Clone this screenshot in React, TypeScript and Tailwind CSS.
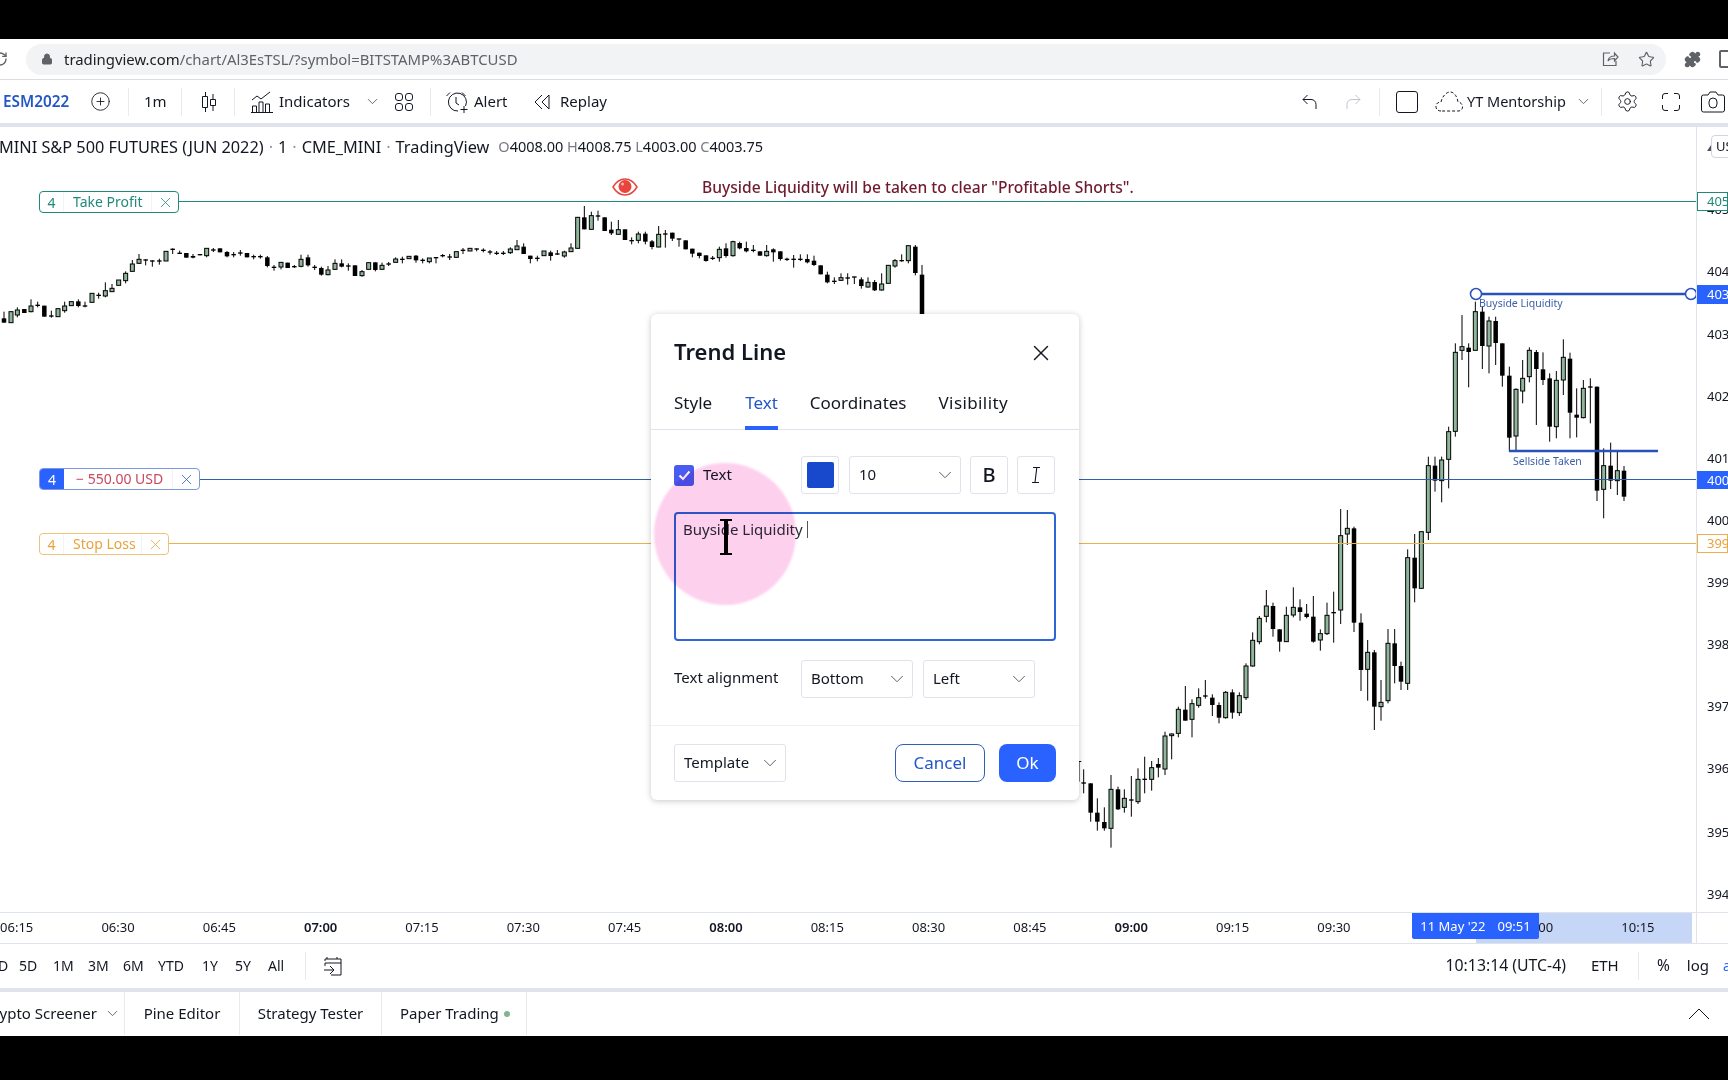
import React from "react";
import { ChevronDown, CirclePlus, Lock, Puzzle, RotateCw, Settings, Star, X } from "lucide-react";

type Row = [number, number, number, number, number, number];

// rows: x, bodyTop, bodyBottom, wickTop, wickBottom, up (read off at 3x, hence the /3)
const seg = (ox: number, oy: number, rows: Row[]) =>
  rows.map(([x, bt, bb, wt, wb, up]) => ({
    x: ox + x / 3,
    bt: oy + bt / 3,
    bb: oy + bb / 3,
    wt: oy + wt / 3,
    wb: oy + wb / 3,
    up: up === 1,
  }));

const candles = [
  ...seg(0, 180, [
    [12, 415, 428, 395, 428, 0], [33, 395, 428, 395, 428, 1], [52, 390, 405, 382, 412, 1], [73, 387, 399, 387, 399, 0],
    [93, 378, 395, 358, 397, 1], [113, 374, 378, 365, 382, 0], [133, 377, 410, 377, 410, 0], [154, 406, 410, 392, 413, 0],
    [174, 386, 410, 386, 410, 1], [194, 378, 392, 365, 398, 1], [214, 365, 377, 365, 377, 1], [235, 364, 378, 358, 382, 0],
    [255, 376, 380, 365, 382, 0], [276, 340, 367, 340, 367, 1], [296, 344, 348, 338, 356, 0], [316, 332, 348, 307, 352, 1],
    [336, 325, 335, 312, 335, 1], [356, 300, 316, 300, 316, 1], [377, 280, 302, 274, 310, 1], [397, 252, 274, 240, 275, 1],
    [417, 238, 250, 222, 252, 1], [437, 238, 242, 238, 256, 0], [457, 241, 245, 241, 260, 0], [478, 241, 245, 236, 254, 0],
    [498, 214, 243, 214, 243, 1], [518, 206, 210, 205, 222, 0], [539, 218, 222, 212, 222, 0], [559, 219, 233, 219, 233, 0],
    [579, 228, 233, 222, 235, 0], [600, 222, 226, 222, 226, 0], [620, 205, 227, 205, 232, 1], [640, 208, 212, 204, 216, 0],
    [660, 205, 217, 205, 217, 0], [681, 216, 229, 213, 232, 0], [701, 222, 226, 216, 232, 0], [721, 217, 221, 210, 227, 0],
    [741, 219, 232, 219, 232, 0], [761, 228, 232, 224, 238, 0], [781, 228, 232, 224, 236, 0], [802, 232, 258, 228, 262, 0],
    [822, 260, 264, 255, 272, 0], [843, 247, 261, 247, 268, 1], [863, 248, 264, 248, 264, 0], [883, 258, 262, 255, 264, 0],
    [903, 238, 259, 224, 262, 1], [924, 232, 256, 224, 260, 0], [944, 260, 264, 255, 270, 0], [964, 264, 284, 260, 287, 0],
    [984, 270, 284, 258, 286, 1], [1005, 250, 268, 238, 270, 1], [1025, 250, 260, 238, 262, 0], [1045, 256, 260, 250, 272, 0],
    [1065, 256, 288, 256, 288, 0], [1086, 275, 287, 270, 290, 1], [1106, 248, 268, 248, 268, 1], [1126, 247, 270, 247, 274, 0],
    [1146, 256, 268, 248, 270, 1], [1166, 250, 254, 246, 258, 0], [1187, 237, 247, 232, 248, 1], [1207, 236, 240, 230, 250, 0],
    [1227, 229, 236, 229, 236, 1], [1248, 227, 241, 225, 248, 0], [1268, 239, 243, 235, 250, 0], [1288, 234, 245, 234, 250, 1],
    [1308, 231, 235, 233, 250, 0], [1328, 225, 229, 222, 232, 0], [1349, 229, 233, 222, 240, 0], [1369, 215, 232, 215, 232, 1],
    [1389, 209, 213, 204, 222, 0], [1410, 205, 213, 205, 213, 1], [1430, 205, 209, 205, 214, 0],
  ]),
  ...seg(480, 190, [
    [10, 179, 183, 175, 187, 0], [30, 184, 188, 180, 194, 0], [50, 188, 192, 183, 195, 0], [70, 188, 192, 183, 195, 0],
    [91, 177, 188, 172, 192, 1], [111, 168, 179, 150, 180, 1], [131, 170, 192, 160, 192, 0], [151, 197, 207, 197, 220, 0],
    [172, 203, 207, 197, 214, 0], [192, 183, 197, 183, 197, 1], [212, 187, 198, 182, 212, 0], [232, 190, 194, 180, 195, 0],
    [253, 186, 198, 182, 203, 1], [273, 174, 185, 160, 186, 1], [293, 82, 175, 82, 175, 1], [313, 82, 118, 48, 118, 0],
    [334, 77, 118, 65, 118, 1], [354, 76, 80, 62, 92, 0], [374, 82, 123, 82, 123, 0], [394, 119, 130, 95, 135, 0],
    [415, 119, 133, 90, 133, 1], [435, 118, 150, 118, 150, 0], [455, 150, 154, 142, 163, 0], [475, 132, 151, 125, 160, 1],
    [496, 131, 155, 125, 163, 0], [516, 154, 171, 150, 178, 0], [536, 133, 171, 108, 172, 1], [556, 130, 134, 120, 173, 0],
    [577, 128, 146, 128, 153, 0], [597, 145, 149, 147, 170, 0], [617, 151, 178, 151, 178, 0], [637, 176, 191, 176, 202, 0],
    [658, 188, 198, 188, 205, 0], [678, 196, 213, 196, 215, 0], [698, 203, 207, 198, 210, 0], [718, 178, 203, 170, 215, 1],
    [738, 175, 198, 160, 203, 0], [759, 155, 197, 152, 200, 1], [779, 159, 175, 155, 178, 0], [799, 174, 184, 155, 187, 0],
    [820, 179, 183, 165, 187, 0], [840, 184, 197, 184, 197, 0], [860, 184, 197, 165, 200, 1], [880, 178, 187, 175, 215, 0],
    [901, 184, 207, 184, 212, 0], [921, 206, 210, 203, 213, 0], [941, 206, 210, 195, 233, 0], [961, 206, 210, 193, 213, 0],
    [982, 207, 217, 193, 220, 0], [1002, 212, 225, 197, 228, 0], [1022, 226, 253, 226, 253, 0], [1042, 254, 277, 245, 280, 0],
    [1063, 272, 276, 262, 282, 0], [1083, 263, 271, 250, 273, 1], [1103, 262, 266, 250, 284, 0], [1123, 259, 263, 261, 282, 0],
    [1144, 268, 288, 262, 296, 0], [1164, 277, 291, 262, 293, 1], [1184, 276, 301, 270, 303, 0], [1205, 282, 300, 250, 302, 1],
    [1225, 226, 280, 226, 280, 1], [1245, 212, 228, 207, 233, 1], [1265, 210, 214, 193, 215, 0], [1285, 167, 212, 167, 220, 1],
    [1306, 170, 249, 165, 256, 0], [1326, 254, 400, 225, 400, 0],
  ]),
  ...seg(1060, 480, [
    [57, 843, 846, 843, 905, 0], [71, 907, 911, 868, 940, 0], [92, 910, 998, 910, 1025, 0], [112, 998, 1025, 955, 1052, 0],
    [133, 1026, 1045, 982, 1052, 0], [153, 928, 1045, 885, 1103, 1], [174, 928, 988, 920, 990, 0], [193, 955, 982, 928, 998, 1],
    [214, 958, 962, 888, 1010, 0], [234, 898, 965, 865, 972, 1], [254, 896, 900, 830, 940, 0], [275, 863, 898, 843, 932, 1],
    [295, 852, 863, 834, 892, 0], [315, 768, 867, 755, 885, 1], [335, 762, 767, 760, 838, 1], [355, 688, 760, 680, 772, 1],
    [376, 689, 722, 618, 722, 0], [396, 671, 718, 658, 772, 1], [416, 653, 676, 625, 683, 1], [436, 646, 650, 600, 656, 0],
    [457, 653, 675, 643, 708, 0], [477, 675, 713, 667, 730, 0], [497, 637, 713, 633, 716, 1], [517, 637, 698, 628, 716, 0],
    [538, 647, 698, 637, 708, 1], [558, 558, 653, 550, 660, 1], [578, 481, 558, 457, 560, 1], [598, 415, 485, 408, 493, 1],
    [619, 378, 409, 330, 427, 1], [639, 378, 447, 368, 470, 0], [659, 448, 485, 448, 515, 0], [679, 406, 485, 380, 485, 1],
    [700, 382, 405, 322, 412, 1], [720, 382, 396, 358, 422, 0], [740, 401, 411, 372, 415, 0], [760, 410, 485, 348, 488, 0],
    [781, 461, 480, 448, 512, 1], [801, 406, 461, 368, 465, 1], [821, 396, 400, 335, 488, 0], [842, 167, 390, 87, 432, 1],
    [862, 145, 162, 90, 195, 1], [882, 145, 428, 140, 456, 0], [903, 428, 570, 400, 633, 0], [923, 517, 568, 480, 662, 1],
    [943, 517, 680, 510, 750, 0], [963, 667, 680, 600, 722, 1], [984, 490, 662, 447, 670, 1], [1004, 490, 558, 447, 610, 0],
  ]),
  ...seg(1385, 530, [
    [48, 408, 455, 395, 480, 0], [68, 83, 460, 58, 480, 1], [89, 83, 175, 12, 217, 0], [109, 5, 175, 5, 175, 1],
  ]),
  ...seg(1400, 270, [
    [85, 587, 787, 560, 810, 1], [105, 587, 632, 560, 665, 0], [125, 570, 632, 560, 697, 1], [146, 485, 568, 470, 655, 1],
    [166, 247, 484, 220, 500, 1], [186, 230, 241, 135, 270, 1], [206, 233, 246, 220, 352, 0], [226, 125, 241, 95, 241, 1],
    [247, 125, 228, 110, 297, 0], [267, 153, 228, 140, 310, 1], [287, 153, 219, 140, 285, 0], [307, 220, 317, 220, 350, 0],
    [328, 317, 503, 290, 545, 0], [348, 358, 498, 355, 545, 1], [368, 325, 363, 270, 400, 1], [388, 241, 320, 232, 337, 1],
    [409, 246, 297, 240, 465, 0], [429, 298, 330, 247, 345, 0], [449, 325, 470, 310, 515, 0], [469, 331, 470, 303, 505, 1],
    [490, 262, 330, 208, 375, 1], [510, 266, 428, 248, 505, 0], [530, 434, 443, 355, 502, 0], [550, 355, 443, 330, 445, 1],
    [571, 349, 353, 325, 460, 0], [591, 350, 662, 350, 693, 0], [611, 587, 658, 535, 745, 1], [632, 587, 632, 518, 657, 0],
    [652, 602, 632, 540, 675, 1], [672, 602, 680, 588, 693, 0],
  ]),
];

const times = [
  "06:15", "06:30", "06:45", "07:00", "07:15", "07:30", "07:45", "08:00", "08:15",
  "08:30", "08:45", "09:00", "09:15", "09:30", "09:45", "10:00", "10:15",
];

const ticks: [string, number][] = [
  ["4050.00", 209], ["4040.00", 271], ["4030.00", 334], ["4020.00", 396], ["4010.00", 458], ["4000.00", 520],
  ["3990.00", 582], ["3980.00", 644], ["3970.00", 706], ["3960.00", 768], ["3950.00", 832], ["3940.00", 894],
];

const Sep = ({ className }: { className: string }) => <div className={`w-px h-[28px] bg-[#e9ebf0] shrink-0 ${className}`} />;

const Chev = ({ className = "" }: { className?: string }) => (
  <ChevronDown size={17} strokeWidth={1.2} className={`text-[#50535e] shrink-0 ${className}`} />
);

const Select = ({ label, width, className = "" }: { label: string; width: string; className?: string }) => (
  <div className={`${width} ${className} h-[38px] border border-[#e0e3eb] rounded-[3px] flex items-center justify-between pl-[9px] pr-[4px] text-[15px] text-[#131722]`}>
    <span className="mt-[-2px]">{label}</span>
    <ChevronDown size={22} strokeWidth={1} className="text-[#50535e] shrink-0" />
  </div>
);

const OrderLabel = ({
  top,
  width,
  text,
  border,
  color,
  textClass = "pl-[9px]",
  active,
}: {
  top: string;
  width: string;
  text: string;
  border: string;
  color: string;
  textClass?: string;
  active?: boolean;
}) => (
  <div className={`absolute left-[39px] ${top} ${width} h-[22px] bg-white border ${border} rounded-[4px] flex items-center text-[14px] overflow-hidden ${color}`}>
    <div className={`w-[24px] h-full flex items-center justify-center shrink-0 ${active ? "bg-[#2962ff] text-white" : "border-r border-[#f0f3fa]"}`}>4</div>
    <div className={`flex-1 whitespace-nowrap mt-[-2px] ${textClass}`}>{text}</div>
    <div className="w-[27px] h-full flex items-center justify-center border-l border-[#f0f3fa] shrink-0">
      <X size={17} strokeWidth={1.1} className={active ? "text-[#2456c8]" : ""} />
    </div>
  </div>
);

export default function App() {
  return (
    <div className="w-[1728px] h-[1080px] bg-black overflow-hidden relative flex flex-col font-['Noto_Sans',sans-serif] text-[#131722]">
      <div className="h-[39px] shrink-0" />

      {/* browser bar */}
      <div className="h-[41px] shrink-0 bg-white border-b border-[#dadce0] flex items-center">
        <div className="w-[26px] shrink-0">
          <RotateCw size={16} strokeWidth={2} className="ml-[-8px] text-[#5f6368]" />
        </div>
        <div className="w-[1640px] h-[31px] shrink-0 bg-[#f1f3f4] rounded-full flex items-center">
          <Lock size={12} strokeWidth={2} fill="#5f6368" className="ml-[15px] text-[#5f6368]" />
          <div className="ml-[11px] text-[14.9px] leading-none whitespace-nowrap">
            <span className="text-[#202124]">tradingview.com</span>
            <span className="text-[#5f6368]">/chart/Al3EsTSL/?symbol=BITSTAMP%3ABTCUSD</span>
          </div>
          <div className="ml-auto flex items-center">
            <svg width="18" height="18" viewBox="0 0 18 18" fill="none" stroke="#5f6368" strokeWidth="1.2">
              <path d="M9 3H2.500v12.500H15V11M7 11c.5-3.500 3-5 6.500-5V3L17 7l-3.500 4V8.500C11 8.500 8.500 9 7 11z" />
            </svg>
            <Star size={17} strokeWidth={1.6} className="ml-[19px] mr-[11px] text-[#5f6368]" />
          </div>
        </div>
        <Puzzle size={17} fill="#5f6368" className="ml-[18px] text-[#5f6368] shrink-0" />
        <div className="ml-[18px] w-[16px] h-[18px] border-2 border-[#5f6368] rounded-[2px] shrink-0" />
      </div>

      {/* top toolbar */}
      <div className="h-[43px] shrink-0 bg-white flex items-center text-[15px] whitespace-nowrap">
        <span className="ml-[3px] w-[66px] font-semibold text-[#2456c8] text-[15.3px]">ESM2022</span>
        <CirclePlus size={21} strokeWidth={1} className="ml-[21px] shrink-0" />
        <Sep className="ml-[17px]" />
        <span className="ml-[15px] w-[21px]">1m</span>
        <Sep className="ml-[16px]" />
        <svg width="16" height="24" viewBox="0 0 16 24" fill="none" stroke="#131722" className="ml-[19px] shrink-0">
          <path d="M4.500 2v4M4.500 18v4M1.500 6.500h5v11h-5zM12 4v5M12 16v5M9.500 9.500h5v6h-5z" />
        </svg>
        <Sep className="ml-[17px]" />
        <svg width="22" height="22" viewBox="0 0 22 22" fill="none" stroke="#131722" className="ml-[16px] shrink-0">
          <path d="M1 9l5-4 4 3 9-7M1.500 21v-6h4v6M8 21V11h4v10M14.500 21v-8h4v8M0 21.500h22" />
        </svg>
        <span className="ml-[6px] w-[69px]">Indicators</span>
        <Chev className="ml-[16px]" />
        <svg width="20" height="20" viewBox="0 0 20 20" fill="none" stroke="#131722" className="ml-[13px] shrink-0">
          <rect x="1.500" y="1.500" width="7" height="7" rx="2.500" />
          <rect x="11.500" y="1.500" width="7" height="7" rx="2.500" />
          <rect x="1.500" y="11.500" width="7" height="7" rx="2.500" />
          <rect x="11.500" y="11.500" width="7" height="7" rx="2.500" />
        </svg>
        <Sep className="ml-[16px]" />
        <svg width="24" height="24" viewBox="0 0 24 24" fill="none" stroke="#131722" className="ml-[14px] shrink-0">
          <path d="M13 21a9 9 0 1 1 7.500-5M11 7v6l3 2M1.500 6L5 2.500M20.500 6L17 2.500M19 16v7M15.500 19.500h7" />
        </svg>
        <span className="ml-[5px] w-[34px]">Alert</span>
        <svg width="20" height="18" viewBox="0 0 20 18" fill="none" stroke="#131722" className="ml-[25px] shrink-0">
          <path d="M9 2L2 9l7 7M16 2l-7 7 7 7V2z" />
        </svg>
        <span className="ml-[7px] w-[46px]">Replay</span>

        <svg width="16" height="16" viewBox="0 0 16 16" fill="none" stroke="#131722" className="ml-[696px] shrink-0">
          <path d="M5.500 1L1 5.500 5.500 10M1 5.500h8c3 0 5 2 5 5V15" />
        </svg>
        <svg width="16" height="16" viewBox="0 0 16 16" fill="none" stroke="#c1c4cd" className="ml-[27px] shrink-0">
          <path d="M10.500 1L15 5.500 10.500 10M15 5.500H7c-3 0-5 2-5 5V15" />
        </svg>
        <Sep className="ml-[18px]" />
        <div className="ml-[16px] w-[22px] h-[22px] border border-[#131722] rounded-[3px] shrink-0" />
        <svg width="28" height="24" viewBox="0 0 28 24" fill="none" stroke="#131722" strokeDasharray="3 2" className="ml-[17px] shrink-0">
          <path d="M6 21C2 21 .5 18 1 15.500 1.500 13 4 12 6 12c1-5 5-10 9-10s7 4 8 10c3 0 4.500 3 4.500 5 0 2.500-2 4-4.500 4H6z" />
        </svg>
        <span className="ml-[4px] w-[101px] text-[14.5px]">YT Mentorship</span>
        <Chev className="ml-[7px]" />
        <Sep className="ml-[9px]" />
        <Settings size={23} strokeWidth={1} className="ml-[14px] shrink-0" />
        <svg width="18" height="18" viewBox="0 0 18 18" fill="none" stroke="#131722" className="ml-[23px] shrink-0">
          <path d="M.5 6V3a2.500 2.500 0 0 1 2.500-2.500h3M12 .5h3A2.500 2.500 0 0 1 17.500 3v3M.5 12v3A2.500 2.500 0 0 0 3 17.500h3M12 17.500h3a2.500 2.500 0 0 0 2.500-2.500v-3" />
        </svg>
        <svg width="24" height="22" viewBox="0 0 24 22" fill="none" stroke="#131722" className="ml-[21px] shrink-0">
          <path d="M7 4l2-3h6l2 3h4.500a2 2 0 0 1 2 2v13a2 2 0 0 1-2 2h-19a2 2 0 0 1-2-2V6a2 2 0 0 1 2-2H7z" />
          <rect x="8" y="7" width="8" height="10" rx="4" />
        </svg>
      </div>
      <div className="h-[4px] shrink-0 bg-[#e0e3eb]" />

      {/* chart + price scale */}
      <div className="h-[785px] shrink-0 bg-white flex">
        <div className="w-[1696px] shrink-0 relative overflow-hidden">
          <svg width="1696" height="785" viewBox="0 127 1696 785" className="absolute inset-0">
            {candles.map((c, i) => (
              <g key={i}>
                <rect x={c.x - 0.5} y={c.wt} width="1" height={c.wb - c.wt} fill="#000" />
                {c.up ? (
                  <rect x={c.x - 2} y={c.bt} width="4" height={c.bb - c.bt} fill="#8fb59b" stroke="#000" strokeWidth="1" />
                ) : (
                  <rect x={c.x - 2.25} y={c.bt} width="4.500" height={Math.max(c.bb - c.bt, 1)} fill="#000" />
                )}
              </g>
            ))}
            <line x1="179" x2="1696" y1="201.500" y2="201.500" stroke="#22897a" />
            <line x1="200" x2="1696" y1="479.500" y2="479.500" stroke="#2d62a8" />
            <line x1="169" x2="1696" y1="543.500" y2="543.500" stroke="#ebb04a" />
            <line x1="1476" x2="1691" y1="294" y2="294" stroke="#2952b8" strokeWidth="2.500" />
            <circle cx="1476" cy="294" r="5.500" fill="#fff" stroke="#2952b8" strokeWidth="1.500" />
            <circle cx="1691" cy="294" r="5.500" fill="#fff" stroke="#2952b8" strokeWidth="1.500" />
            <line x1="1509" x2="1658" y1="451" y2="451" stroke="#2952b8" strokeWidth="2.500" />
          </svg>

          <div className="absolute left-[-1px] top-[8px] h-[24px] flex items-center whitespace-nowrap text-[16.3px]">
            <span>MINI S&amp;P 500 FUTURES (JUN 2022)</span>
            <span className="mx-[5px] text-[#9598a1]">·</span>
            <span>1</span>
            <span className="mx-[5px] text-[#9598a1]">·</span>
            <span>CME_MINI</span>
            <span className="mx-[5px] text-[#9598a1]">·</span>
            <span>TradingView</span>
            <span className="ml-[9px] text-[14.5px]">
              <span className="text-[#787b86]">O</span>4008.00 <span className="text-[#787b86]">H</span>4008.75{" "}
              <span className="text-[#787b86]">L</span>4003.00 <span className="text-[#787b86]">C</span>4003.75
            </span>
          </div>

          <svg width="26" height="18" viewBox="0 0 26 18" fill="none" className="absolute left-[612px] top-[51px]">
            <path d="M1 9c3-5 7-8 12-8s9 3 12 8c-3 5-7 8-12 8S4 14 1 9z" fill="#fff" stroke="#e8453c" strokeWidth="1.500" />
            <circle cx="13" cy="8.500" r="6.500" fill="#e8453c" />
            <circle cx="10.500" cy="6" r="1.500" fill="#f7b5ae" />
          </svg>
          <div className="absolute left-[702px] top-[50px] h-[22px] flex items-center text-[15.6px] font-medium text-[#6f1a30] whitespace-nowrap">
            Buyside Liquidity will be taken to clear "Profitable Shorts".
          </div>

          <OrderLabel top="top-[64px]" width="w-[140px]" text="Take Profit" border="border-[#22897a]" color="text-[#22897a]" />
          <OrderLabel top="top-[341px]" width="w-[161px]" text="− 550.00 USD" textClass="pl-[12px]" border="border-[#7d98d8]" color="text-[#c8485f]" active />
          <OrderLabel top="top-[406px]" width="w-[130px]" text="Stop Loss" border="border-[#f0c27a]" color="text-[#e8a33d]" />

          <div className="absolute left-[1479px] top-[169px] text-[10.5px] leading-[14px] text-[#3a5fa8] whitespace-nowrap">Buyside Liquidity</div>
          <div className="absolute left-[1513px] top-[327px] text-[10.5px] leading-[14px] text-[#3a5fa8] whitespace-nowrap">Sellside Taken</div>
        </div>

        {/* price scale */}
        <div className="flex-1 relative border-l border-[#e0e3eb] text-[13px] overflow-hidden">
          <svg width="6" height="8" viewBox="0 0 6 8" className="absolute left-[9px] top-[17px]">
            <path d="M5 1v6H1z" fill="#50535e" />
          </svg>
          <div className="absolute left-[14px] top-[8px] h-[23px] w-[40px] border border-[#d1d4dc] rounded-[4px] pl-[4px] flex items-center">USD</div>
          {ticks.map(([t, y]) => (
            <div key={t} className="absolute left-[10px] h-[18px] leading-[18px]" style={{ top: y - 127 - 9 }}>
              {t}
            </div>
          ))}
          <div className="absolute left-0 top-[65px] h-[19px] w-full border border-[#22897a] bg-white pl-[9px] leading-[17px] text-[#22897a]">4051.25</div>
          <div className="absolute left-0 top-[158px] h-[19px] w-full bg-[#2962ff] pl-[10px] leading-[19px] text-white">4033.25</div>
          <div className="absolute left-0 top-[344px] h-[18px] w-full bg-[#2962ff] pl-[10px] leading-[18px] text-white">4003.75</div>
          <div className="absolute left-0 top-[407px] h-[19px] w-full border border-[#ebb04a] bg-white pl-[9px] leading-[17px] text-[#e8a33d]">3996.50</div>
        </div>
      </div>

      {/* time axis */}
      <div className="h-[32px] shrink-0 bg-white border-y border-[#e0e3eb] relative overflow-hidden flex items-center text-[13px]">
        <div className="absolute left-[1476px] top-0 w-[216px] h-full bg-[#c6d6f7]" />
        {times.map((t, i) => (
          <div
            key={t}
            className={`w-[101.33px] shrink-0 text-center relative ${t.endsWith(":00") && t !== "10:00" ? "font-semibold" : ""} ${i === 0 ? "ml-[-34px]" : ""}`}
          >
            {t}
          </div>
        ))}
        <div className="absolute left-[1412px] top-[-1px] w-[127px] h-[27px] pt-[3px] bg-[#2962ff] rounded-b-[2px] text-white flex items-center justify-center gap-[12px]">
          <span>11 May '22</span>
          <span>09:51</span>
        </div>
        <div className="absolute left-[1696px] top-0 w-[32px] h-full bg-white border-l border-[#e0e3eb]" />
      </div>

      {/* bottom toolbar */}
      <div className="h-[44px] shrink-0 bg-white flex items-center text-[14px] whitespace-nowrap pb-[1px]">
        <div className="flex w-[305px] shrink-0 relative h-full items-center">
          <span className="absolute left-[-10px]">1D</span>
          <span className="absolute left-[19px]">5D</span>
          <span className="absolute left-[53px]">1M</span>
          <span className="absolute left-[88px]">3M</span>
          <span className="absolute left-[123px]">6M</span>
          <span className="absolute left-[158px]">YTD</span>
          <span className="absolute left-[202px]">1Y</span>
          <span className="absolute left-[235px]">5Y</span>
          <span className="absolute left-[268px]">All</span>
        </div>
        <Sep className="" />
        <svg width="20" height="20" viewBox="0 0 20 20" fill="none" stroke="#131722" className="ml-[17px] shrink-0">
          <path d="M4 3V1M14 3V1M2 5V3h16v16H8M2 7h16M1 14h10M7 10l4 4-4 4M2 10V7" />
        </svg>
        <span className="ml-auto text-[15.8px]">10:13:14 (UTC-4)</span>
        <span className="ml-[25px] w-[28px] text-[15px]">ETH</span>
        <Sep className="ml-[19px]" />
        <span className="ml-[18px] text-[15.5px]">%</span>
        <span className="ml-[17px] text-[15px]">log</span>
        <span className="ml-[14px] w-[5px] overflow-hidden text-[#2962ff]">auto</span>
      </div>
      <div className="h-[4px] shrink-0 bg-[#e0e3eb]" />

      {/* bottom tabs */}
      <div className="h-[44px] shrink-0 bg-white flex items-center text-[15px] whitespace-nowrap pb-[1px]">
        <div className="w-[125px] h-full shrink-0 border-r border-[#e9ebf0] flex items-center justify-end pr-[3px] overflow-hidden">
          <span>Crypto Screener</span>
          <Chev className="ml-[7px]" />
        </div>
        <div className="w-[115px] h-full shrink-0 border-r border-[#e9ebf0] flex items-center justify-center">Pine Editor</div>
        <div className="w-[142px] h-full shrink-0 border-r border-[#e9ebf0] flex items-center justify-center">Strategy Tester</div>
        <div className="w-[145px] h-full shrink-0 border-r border-[#e9ebf0] flex items-center pl-[18px]">
          Paper Trading
          <span className="ml-[5px] w-[6px] h-[6px] rounded-full bg-[#7fb58f]" />
        </div>
        <svg width="22" height="12" viewBox="0 0 22 12" fill="none" stroke="#131722" className="ml-auto mr-[18px]">
          <path d="M1 11L11 1l10 10" />
        </svg>
      </div>
      <div className="flex-1" />

      {/* Trend Line dialog */}
      <div className="absolute left-[651px] top-[314px] w-[428px] h-[486px] bg-white rounded-[6px] shadow-[0_1px_6px_rgba(0,0,0,0.22)] flex flex-col">
        <div className="h-[78px] shrink-0 flex items-center justify-between pl-[23px] pr-[28px]">
          <span className="text-[22px] font-semibold leading-none mt-[-4px]">Trend Line</span>
          <X size={26} strokeWidth={1.3} className="mr-[-3px]" />
        </div>
        <div className="h-[38px] shrink-0 border-b border-[#e0e3eb] flex pl-[23px] text-[17px] leading-[22px]">
          <div className="mr-[33px] h-full">Style</div>
          <div className="mr-[32px] h-[38px] border-b-4 border-[#2962ff] text-[#2457c5]">Text</div>
          <div className="mr-[32px] h-full">Coordinates</div>
          <div className="h-full tracking-[0.4px]">Visibility</div>
        </div>

        <div className="pl-[23px] pr-[23px] pt-[26px] flex flex-col">
          <div className="flex items-center h-[38px]">
            <div className="w-[20px] h-[21px] rounded-[3px] bg-[#4a5cf0] flex items-center justify-center shrink-0">
              <svg width="13" height="11" viewBox="0 0 13 11" fill="none" stroke="#fff" strokeWidth="2">
                <path d="M1.500 5.500l3.500 3.500 6.500-7.500" />
              </svg>
            </div>
            <span className="ml-[9px] w-[98px] text-[15px] mt-[-2px]">Text</span>
            <div className="w-[38px] h-[38px] border border-[#e0e3eb] rounded-[3px] flex items-center justify-center shrink-0">
              <div className="w-[27px] h-[26px] rounded-[2px] bg-[#1848cc]" />
            </div>
            <Select label="10" width="w-[112px]" className="ml-[10px]" />
            <div className="ml-[9px] w-[38px] h-[38px] border border-[#e0e3eb] rounded-[3px] flex items-center justify-center text-[20px] font-medium">B</div>
            <div className="ml-[9px] w-[38px] h-[38px] border border-[#e0e3eb] rounded-[3px] flex items-center justify-center">
              <svg width="12" height="18" viewBox="0 0 12 18" fill="none" stroke="#131722" strokeWidth="1.100">
                <path d="M3 1.500h7M2 16.500h7M6.800 1.500L5 16.500" />
              </svg>
            </div>
          </div>

          <div className="mt-[18px] h-[129px] border-2 border-[#2f66d6] rounded-[4px] px-[7px] pt-[5px] text-[15px] leading-[20px] text-[#2a2e39]">
            Buyside Liquidity
            <span className="inline-block ml-[4px] w-px h-[17px] bg-[#555] align-[-3px]" />
          </div>

          <div className="mt-[19px] flex items-center h-[38px]">
            <span className="w-[127px] text-[15px] mt-[-3px]">Text alignment</span>
            <Select label="Bottom" width="w-[112px]" />
            <Select label="Left" width="w-[112px]" className="ml-[10px]" />
          </div>
        </div>

        <div className="mt-[27px] border-t border-[#eef0f4] flex-1 pl-[23px] pr-[23px] pt-[18px] flex items-start">
          <Select label="Template" width="w-[112px]" />
          <div className="ml-auto w-[90px] h-[38px] border border-[#2f5fb8] rounded-[8px] flex items-center justify-center text-[17px] text-[#2456c8]">Cancel</div>
          <div className="ml-[14px] w-[57px] h-[38px] bg-[#2962ff] rounded-[8px] flex items-center justify-center text-[17px] text-white">Ok</div>
        </div>
      </div>

      {/* cursor highlight */}
      <div className="absolute left-[654px] top-[463px] w-[142px] h-[142px] rounded-full bg-[#fdd0ee] mix-blend-multiply blur-[1px]" />
      <svg width="14" height="36" viewBox="0 0 14 36" fill="none" stroke="#000" className="absolute left-[719px] top-[519px]">
        <path d="M1 1h12M1 35h12" strokeWidth="2" />
        <path d="M7 1v34" strokeWidth="4" />
      </svg>
    </div>
  );
}
